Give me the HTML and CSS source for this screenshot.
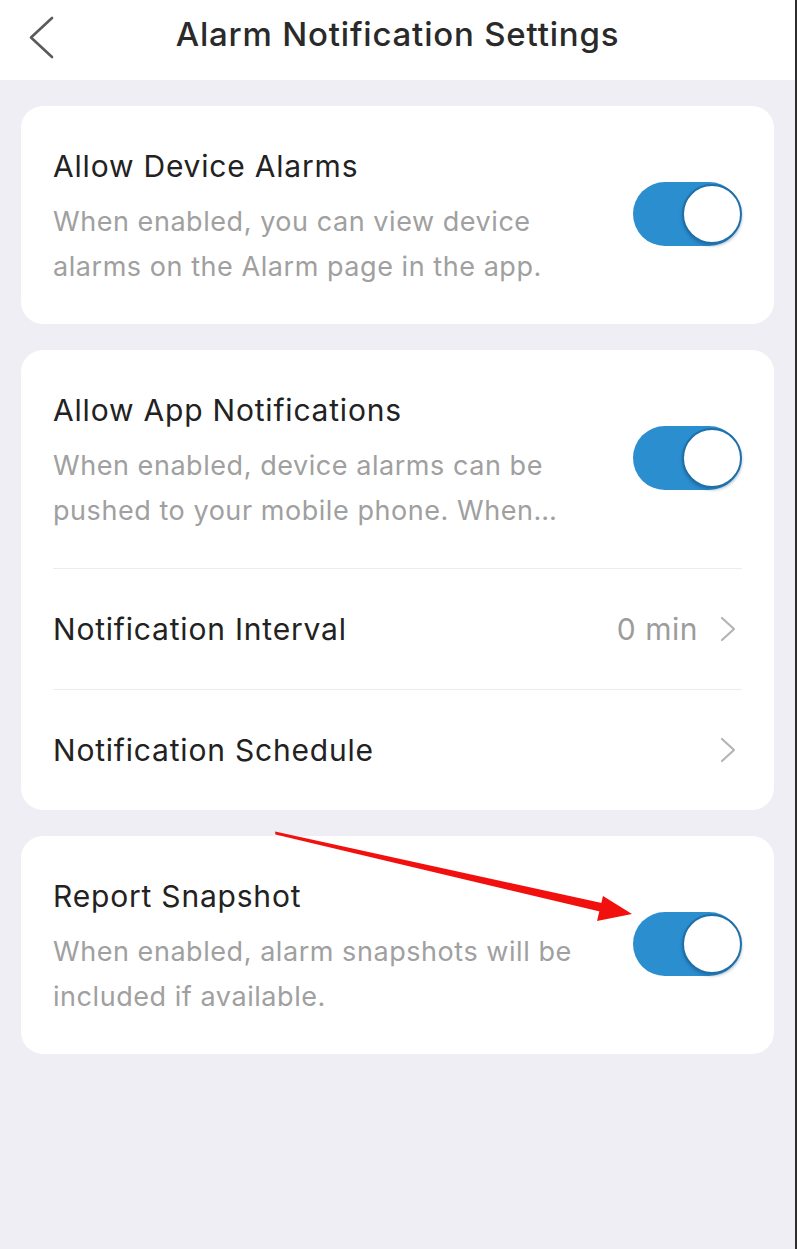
FILE: index.html
```html
<!DOCTYPE html>
<html lang="en">
<head>
<meta charset="utf-8">
<title>Alarm Notification Settings</title>
<link rel="stylesheet" href="styles.css">
</head>
<body>
<div class="screen">
  <header class="header">
    <button class="back" aria-label="Back">
      <svg width="30" height="44" viewBox="0 0 30 44"><path d="M23 3 L2 22.5 L23 42" fill="none" stroke="#5a5a5a" stroke-width="2.6" stroke-linecap="round" stroke-linejoin="round"/></svg>
    </button>
    <h1 class="title">Alarm Notification Settings</h1>
    <span class="spacer"></span>
  </header>

  <main class="content">
    <section class="card">
      <div class="toggle-row">
        <div class="text">
          <div class="row-title">Allow Device Alarms</div>
          <div class="row-desc">When enabled, you can view device alarms on the Alarm page in the app.</div>
        </div>
        <span class="switch on"><span class="knob"></span></span>
      </div>
    </section>

    <section class="card">
      <div class="toggle-row">
        <div class="text">
          <div class="row-title">Allow App Notifications</div>
          <div class="row-desc">When enabled, device alarms can be pushed to your mobile phone. When…</div>
        </div>
        <span class="switch on"><span class="knob"></span></span>
      </div>
      <div class="nav-row">
        <span class="nav-label">Notification Interval</span>
        <span class="nav-value">0 min</span>
        <svg class="chev" width="18" height="26" viewBox="0 0 18 26"><path d="M3 2 L15 13 L3 24" fill="none" stroke="#b4b4b4" stroke-width="2.2" stroke-linecap="round" stroke-linejoin="round"/></svg>
      </div>
      <div class="nav-row">
        <span class="nav-label">Notification Schedule</span>
        <svg class="chev" width="18" height="26" viewBox="0 0 18 26"><path d="M3 2 L15 13 L3 24" fill="none" stroke="#b4b4b4" stroke-width="2.2" stroke-linecap="round" stroke-linejoin="round"/></svg>
      </div>
    </section>

    <section class="card">
      <div class="toggle-row">
        <div class="text">
          <div class="row-title">Report Snapshot</div>
          <div class="row-desc">When enabled, alarm snapshots will be included if available.</div>
        </div>
        <span class="switch on"><span class="knob"></span></span>
      </div>
    </section>
  </main>

  <svg class="annotation" width="797" height="1249" viewBox="0 0 797 1249" aria-hidden="true">
    <polygon points="275,831.5 275.5,834.5 602,912 604,903.5" fill="#f2100f"/>
    <polygon points="603,896 632,914 597,921" fill="#f2100f"/>
  </svg>
</div>
</body>
</html>
```

FILE: styles.css
```css
* { box-sizing: border-box; }

html, body {
  margin: 0;
  padding: 0;
}

body {
  width: 797px;
  height: 1249px;
  background: #efeef4;
  font-family: Inter, "Liberation Sans", Arial, sans-serif;
  color: #222;
  overflow: hidden;
}

.screen {
  position: relative;
  width: 797px;
  height: 1249px;
  border-right: 2px solid #2e2e2e;
  background: #efeef4;
}

.header {
  height: 80px;
  background: #fff;
  display: grid;
  grid-template-columns: 1fr auto 1fr;
  align-items: center;
}

.back {
  justify-self: start;
  margin-left: 29px;
  padding: 0;
  border: 0;
  background: none;
  display: flex;
  margin-top: -6px;
}

.title {
  margin: 0;
  font-size: 33px;
  font-weight: 500;
  color: #2a2a2a;
  letter-spacing: 0.8px;
  margin-top: -12px;
}

.content {
  padding: 26px 21px;
  display: flex;
  flex-direction: column;
  gap: 26px;
}

.card {
  background: #fff;
  border-radius: 22px;
}

.toggle-row {
  height: 218px;
  padding: 0 33px 0 32px;
  display: flex;
  align-items: center;
  justify-content: space-between;
}

.text {
  flex: 1;
  min-width: 0;
  padding-top: 3px;
  margin-right: 30px;
}

.row-title {
  font-size: 30px;
  line-height: 45px;
  letter-spacing: 0.8px;
  color: #222;
}

.row-desc {
  margin-top: 10px;
  font-size: 27px;
  line-height: 45px;
  letter-spacing: 0.55px;
  color: #a0a0a0;
}

.switch {
  flex: none;
  width: 108px;
  height: 64px;
  border-radius: 32px;
  background: #2b8ecf;
  display: flex;
  align-items: center;
  justify-content: flex-end;
  margin-top: -2px;
}

.knob {
  width: 60px;
  height: 60px;
  border-radius: 50%;
  background: #fff;
  border: 2px solid #1f6fa8;
  box-shadow: 0 2px 3px rgba(20, 70, 110, 0.35);
  margin-right: -1px;
}

.nav-row {
  margin: 0 32px;
  height: 121px;
  border-top: 1.5px solid #ececef;
  display: flex;
  align-items: center;
  gap: 20px;
  padding-right: 5px;
}

.nav-label {
  flex: 1;
  font-size: 30px;
  letter-spacing: 0.8px;
  color: #222;
}

.nav-value {
  font-size: 30px;
  letter-spacing: 0.5px;
  color: #9c9c9c;
  margin-right: 1px;
}

.chev {
  flex: none;
}

.annotation {
  position: absolute;
  left: 0;
  top: 0;
  pointer-events: none;
}
```
